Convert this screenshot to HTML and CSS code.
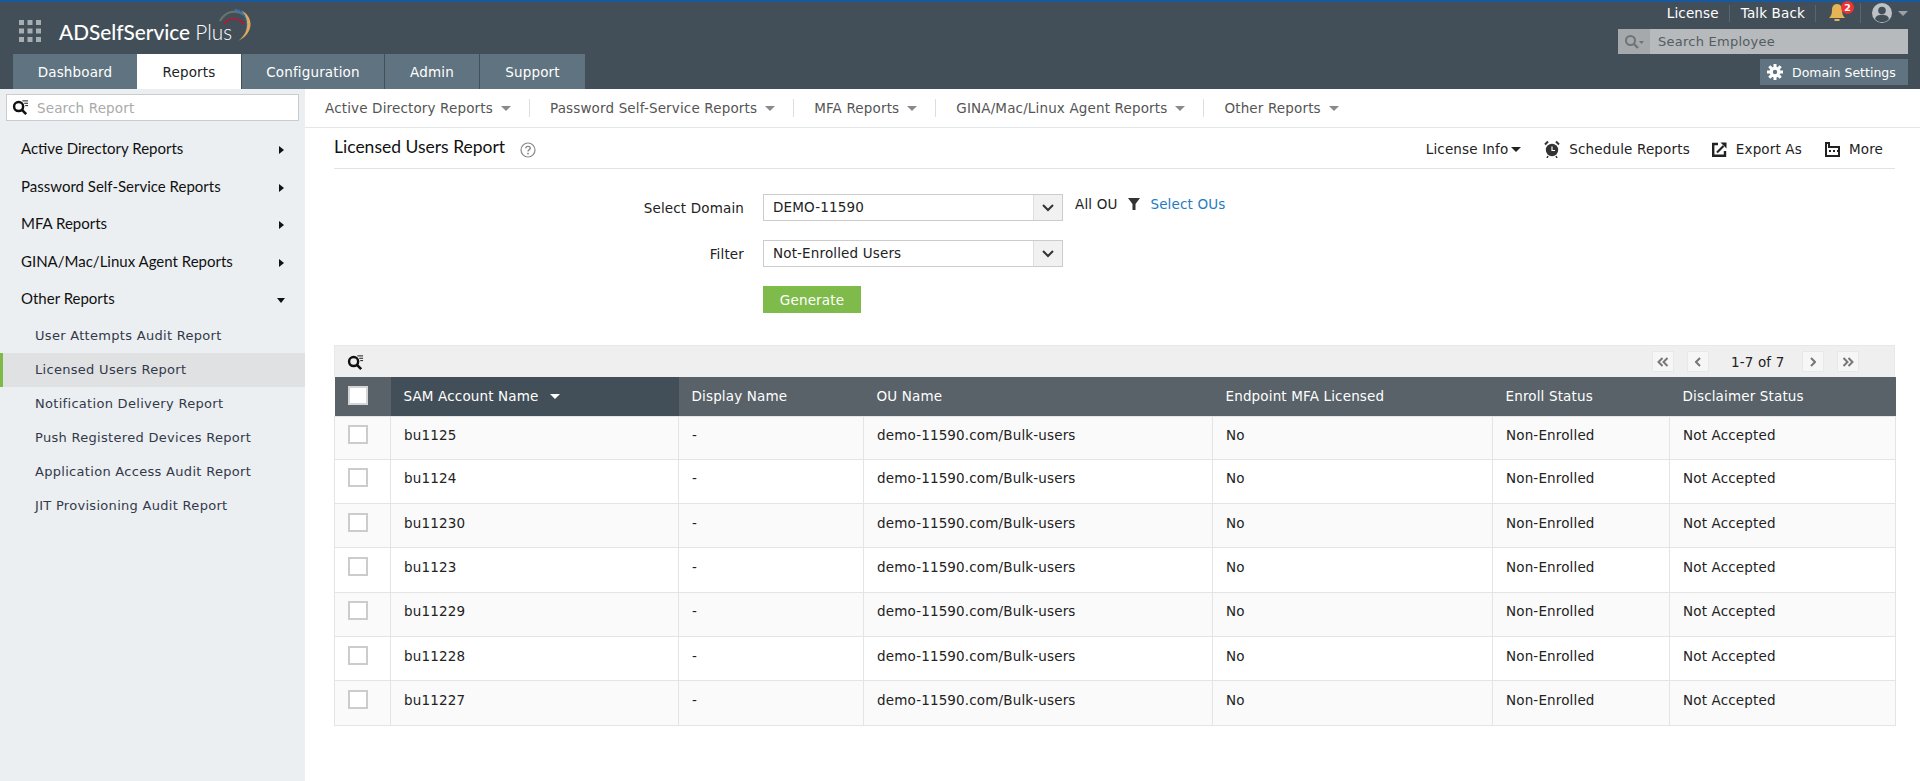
FILE: index.html
```html
<!DOCTYPE html>
<html lang="en">
<head>
<meta charset="utf-8">
<title>ADSelfService Plus - Licensed Users Report</title>
<link rel="stylesheet" href="styles.css">
</head>
<body>
<header class="topbar">
  <div class="top-left">
    <div class="brand">
      <svg class="apps" viewBox="0 0 22 22" width="22" height="22"><g fill="#a7aeb2"><rect width="5" height="5"/><rect x="8.500" width="5" height="5"/><rect x="17" width="5" height="5"/><rect y="8.500" width="5" height="5"/><rect x="8.500" y="8.500" width="5" height="5"/><rect x="17" y="8.500" width="5" height="5"/><rect y="17" width="5" height="5"/><rect x="8.500" y="17" width="5" height="5"/><rect x="17" y="17" width="5" height="5"/></g></svg>
      <span class="logo-text">ADSelfService <span class="logo-plus">Plus</span></span>
      <svg class="logo-arc" viewBox="0 0 36 34" width="36" height="34"><path d="M2 13C7 3 19 1 26 7" fill="none" stroke="#66756a" stroke-width="2.200"/><path d="M6 16C11 9 20 9 26 16" fill="none" stroke="#c2142a" stroke-width="2.200" stroke-dasharray="2 1"/><path d="M17 2C27 3 31 12 29 23" fill="none" stroke="#2f74c4" stroke-width="2.600" stroke-dasharray="2 1"/><path d="M24 3C35 8 37 25 20 33C31 25 32 12 24 3Z" fill="#e0a95a"/></svg>
    </div>
    <nav class="tabs">
      <a class="tab">Dashboard</a>
      <a class="tab tab-active">Reports</a>
      <a class="tab">Configuration</a>
      <a class="tab">Admin</a>
      <a class="tab">Support</a>
    </nav>
  </div>
  <div class="top-right">
    <div class="links">
      <a class="link">License</a>
      <a class="link link-sep">Talk Back</a>
      <span class="bell">
        <svg viewBox="0 0 18 20" width="18" height="20"><path d="M9 1C5.500 1 4 4 4 7C4 11 3 13 1 15H17C15 13 14 11 14 7C14 4 12.500 1 9 1Z" fill="#e5b456"/><rect x="6.500" y="16" width="5" height="2" fill="#e5b456"/></svg>
        <span class="badge">2</span>
      </span>
      <span class="avatar">
        <svg viewBox="0 0 20 20" width="20" height="20"><circle cx="10" cy="10" r="10" fill="#bcc2c5"/><circle cx="10" cy="7.500" r="3.800" fill="#434f58"/><path d="M3 16C4 12.500 7 11.800 10 11.800S16 12.500 17 16C15 18.500 12.500 19 10 19S5 18.500 3 16Z" fill="#434f58"/></svg>
      </span>
      <i class="caret caret-grey"></i>
    </div>
    <div class="emp-search">
      <span class="emp-icon">
        <svg viewBox="0 0 20 16" width="20" height="16"><circle cx="6.500" cy="6.500" r="4.500" fill="none" stroke="#6d7478" stroke-width="2"/><path d="M10 10L14 14" stroke="#6d7478" stroke-width="2.400"/><path d="M15 7H20L17.500 10Z" fill="#6d7478"/></svg>
      </span>
      <span class="emp-text">Search Employee</span>
    </div>
    <a class="domain-btn">
      <svg viewBox="0 0 16 16" width="16" height="16"><path fill-rule="evenodd" fill="#fff" d="M8 2.500A5.500 5.500 0 1 0 8 13.500A5.500 5.500 0 1 0 8 2.500ZM8 5.800A2.200 2.200 0 1 1 8 10.200A2.200 2.200 0 1 1 8 5.800Z"/><g stroke="#fff" stroke-width="3"><path d="M8 0V3M8 13V16M0 8H3M13 8H16M2.300 2.300L4.400 4.400M11.600 11.600L13.700 13.700M13.700 2.300L11.600 4.400M4.400 11.600L2.300 13.700"/></g></svg>
      <span>Domain Settings</span>
    </a>
  </div>
</header>

<div class="body-row">
  <aside class="sidebar">
    <div class="side-search">
      <svg viewBox="0 0 18 18" width="17" height="17"><circle cx="7" cy="8" r="4.800" fill="none" stroke="#111" stroke-width="2.600"/><path d="M10.500 11.500L15 16" stroke="#111" stroke-width="2.800"/><path d="M11 2H17M13 4.500H17M14 7H17" stroke="#111" stroke-width="1"/></svg>
      <span>Search Report</span>
    </div>
    <ul class="menu">
      <li class="menu-item">Active Directory Reports<i class="tri-right"></i></li>
      <li class="menu-item">Password Self-Service Reports<i class="tri-right"></i></li>
      <li class="menu-item">MFA Reports<i class="tri-right"></i></li>
      <li class="menu-item">GINA/Mac/Linux Agent Reports<i class="tri-right"></i></li>
      <li class="menu-item">Other Reports<i class="tri-down"></i></li>
    </ul>
    <ul class="submenu">
      <li class="sub-item">User Attempts Audit Report</li>
      <li class="sub-item sub-active">Licensed Users Report</li>
      <li class="sub-item">Notification Delivery Report</li>
      <li class="sub-item">Push Registered Devices Report</li>
      <li class="sub-item">Application Access Audit Report</li>
      <li class="sub-item">JIT Provisioning Audit Report</li>
    </ul>
  </aside>

  <main class="content">
    <nav class="subnav">
      <a class="subnav-item">Active Directory Reports<i class="caret"></i></a>
      <a class="subnav-item">Password Self-Service Reports<i class="caret"></i></a>
      <a class="subnav-item">MFA Reports<i class="caret"></i></a>
      <a class="subnav-item">GINA/Mac/Linux Agent Reports<i class="caret"></i></a>
      <a class="subnav-item">Other Reports<i class="caret"></i></a>
    </nav>

    <section class="report">
      <div class="title-row">
        <h1 class="title">Licensed Users Report</h1>
        <svg class="help" viewBox="0 0 16 16" width="16" height="16"><circle cx="8" cy="8" r="7" fill="none" stroke="#888" stroke-width="1.200"/><path d="M5.800 6.200C5.800 3.800 10.300 3.800 10.300 6.200C10.300 7.800 8 7.600 8 9.600" fill="none" stroke="#888" stroke-width="1.400"/><rect x="7.200" y="10.800" width="1.600" height="1.600" fill="#888"/></svg>
        <div class="actions">
          <a class="action action-info">License Info<i class="caret caret-dark"></i></a>
          <a class="action">
            <svg viewBox="0 0 16 18" width="16" height="18"><circle cx="8" cy="10" r="6.200" fill="#333"/><path d="M8 6.500V10.500H11" fill="none" stroke="#fff" stroke-width="1.200"/><path d="M1 4.500L4 1.500M15 4.500L12 1.500" stroke="#333" stroke-width="2"/><path d="M4 16L3 18M12 16L13 18" stroke="#333" stroke-width="1.500"/></svg>
            <span>Schedule Reports</span>
          </a>
          <a class="action">
            <svg viewBox="0 0 15 15" width="15" height="15"><path d="M6 2H1.200V13.800H13V9" fill="none" stroke="#222" stroke-width="2.400"/><path d="M8.500 0.500H14.500V6.500Z" fill="#222"/><path d="M5 10.500L11.500 4" stroke="#222" stroke-width="2.200"/></svg>
            <span>Export As</span>
          </a>
          <a class="action action-more">
            <svg viewBox="0 0 15 15" width="15" height="15"><path d="M1 1H4V5H14V14H1Z" fill="none" stroke="#222" stroke-width="2"/><path d="M4 8H6V10H4ZM8 8H10V10H8ZM12 8H15V10H12Z" fill="#222"/></svg>
            <span>More</span>
          </a>
        </div>
      </div>

      <form class="filters">
        <label class="f-label">Select Domain</label>
        <div class="select"><span class="select-val">DEMO-11590</span><span class="select-arrow"><svg viewBox="0 0 12 8" width="12" height="8"><path d="M1 1L6 6L11 1" fill="none" stroke="#333" stroke-width="2"/></svg></span></div>
        <div class="ou">
          <span>All OU</span>
          <svg viewBox="0 0 12 12" width="12" height="12"><path d="M0 0H12L7.500 6V12H4.500V6Z" fill="#333"/></svg>
          <a class="ou-link">Select OUs</a>
        </div>
        <label class="f-label">Filter</label>
        <div class="select"><span class="select-val">Not-Enrolled Users</span><span class="select-arrow"><svg viewBox="0 0 12 8" width="12" height="8"><path d="M1 1L6 6L11 1" fill="none" stroke="#333" stroke-width="2"/></svg></span></div>
        <span></span>
        <span></span>
        <button class="generate" type="button">Generate</button>
      </form>

      <div class="toolbar">
        <svg class="tool-search" viewBox="0 0 18 18" width="17" height="17"><circle cx="7" cy="8" r="4.800" fill="none" stroke="#111" stroke-width="2.600"/><path d="M10.500 11.500L15 16" stroke="#111" stroke-width="2.800"/><path d="M11 2H17M13 4.500H17M14 7H17" stroke="#111" stroke-width="1"/></svg>
        <div class="pager">
          <span class="pg-btn"><svg viewBox="0 0 12 10" width="12" height="10"><path d="M5.500 1L1.500 5L5.500 9M10.500 1L6.500 5L10.500 9" fill="none" stroke="#777" stroke-width="2"/></svg></span>
          <span class="pg-btn"><svg viewBox="0 0 6 10" width="6" height="10"><path d="M5 1L1 5L5 9" fill="none" stroke="#777" stroke-width="2"/></svg></span>
          <span class="pg-text">1-7 of 7</span>
          <span class="pg-btn"><svg viewBox="0 0 6 10" width="6" height="10"><path d="M1 1L5 5L1 9" fill="none" stroke="#777" stroke-width="2"/></svg></span>
          <span class="pg-btn"><svg viewBox="0 0 12 10" width="12" height="10"><path d="M1.500 1L5.500 5L1.500 9M6.500 1L10.500 5L6.500 9" fill="none" stroke="#777" stroke-width="2"/></svg></span>
        </div>
      </div>

      <table class="grid">
        <colgroup>
          <col class="c-check"><col class="c-sam"><col class="c-disp"><col class="c-ou"><col class="c-mfa"><col class="c-enroll"><col class="c-disc">
        </colgroup>
        <thead>
          <tr>
            <th class="th-check"><span class="cb cb-head"></span></th>
            <th class="th-sorted">SAM Account Name<i class="caret caret-white"></i></th>
            <th>Display Name</th>
            <th>OU Name</th>
            <th>Endpoint MFA Licensed</th>
            <th>Enroll Status</th>
            <th>Disclaimer Status</th>
          </tr>
        </thead>
        <tbody>
          <tr><td class="td-check"><span class="cb"></span></td><td>bu1125</td><td>-</td><td>demo-11590.com/Bulk-users</td><td>No</td><td>Non-Enrolled</td><td>Not Accepted</td></tr>
          <tr><td class="td-check"><span class="cb"></span></td><td>bu1124</td><td>-</td><td>demo-11590.com/Bulk-users</td><td>No</td><td>Non-Enrolled</td><td>Not Accepted</td></tr>
          <tr><td class="td-check"><span class="cb"></span></td><td>bu11230</td><td>-</td><td>demo-11590.com/Bulk-users</td><td>No</td><td>Non-Enrolled</td><td>Not Accepted</td></tr>
          <tr><td class="td-check"><span class="cb"></span></td><td>bu1123</td><td>-</td><td>demo-11590.com/Bulk-users</td><td>No</td><td>Non-Enrolled</td><td>Not Accepted</td></tr>
          <tr><td class="td-check"><span class="cb"></span></td><td>bu11229</td><td>-</td><td>demo-11590.com/Bulk-users</td><td>No</td><td>Non-Enrolled</td><td>Not Accepted</td></tr>
          <tr><td class="td-check"><span class="cb"></span></td><td>bu11228</td><td>-</td><td>demo-11590.com/Bulk-users</td><td>No</td><td>Non-Enrolled</td><td>Not Accepted</td></tr>
          <tr><td class="td-check"><span class="cb"></span></td><td>bu11227</td><td>-</td><td>demo-11590.com/Bulk-users</td><td>No</td><td>Non-Enrolled</td><td>Not Accepted</td></tr>
        </tbody>
      </table>
    </section>
  </main>
</div>
</body>
</html>
```

FILE: styles.css
```css
* { box-sizing: border-box; }
html, body { margin: 0; padding: 0; height: 100%; }
body {
  font-family: "DejaVu Sans", sans-serif;
  font-size: 13.500px;
  letter-spacing: 0.150px;
  color: #222;
  background: #fff;
  overflow: hidden;
  display: flex;
  flex-direction: column;
}
ul { list-style: none; margin: 0; padding: 0; }
i { display: inline-block; }

/* Top bar */
.topbar {
  height: 89px;
  flex: none;
  background: #434f58;
  border-top: 2px solid #17589f;
  display: flex;
  justify-content: space-between;
}
.top-left { display: flex; flex-direction: column; justify-content: flex-end; padding-left: 13px; }
.brand { flex: 1; display: flex; align-items: center; padding: 6px 0 0 6px; }
.apps { flex: none; }
.logo-text {
  font-family: Lato, sans-serif;
  font-size: 20.800px;
  font-weight: 500;
  color: #fff;
  margin-left: 18px;
  letter-spacing: 0;
}
.logo-plus { font-weight: 300; }
.logo-arc { margin: -12px 0 0 -14px; }
.tabs { display: flex; gap: 1px; height: 35px; }
.tab {
  display: flex;
  align-items: center;
  justify-content: center;
  background: #5f7480;
  color: #fff;
  height: 35px;
}
.tab:nth-child(1) { width: 124px; margin-right: -1px; }
.tab:nth-child(2) { width: 104px; }
.tab:nth-child(3) { width: 142px; }
.tab:nth-child(4) { width: 94px; }
.tab:nth-child(5) { width: 105px; }
.tab-active { background: #fff; color: #222; }

.top-right { width: 291px; padding-right: 12px; display: flex; flex-direction: column; align-items: flex-end; }
.links { height: 27px; padding-bottom: 5px; display: flex; align-items: center; justify-content: flex-end; color: #fff; }
.link { color: #fff; }
.link-sep { margin-left: 10px; padding-left: 11px; border-left: 1px solid #5a666f; line-height: 17px; }
.bell {
  position: relative;
  display: flex;
  margin-left: 10px;
  padding: 0 14px 0 12px;
  border-left: 1px solid #5a666f;
  height: 17px;
  align-items: center;
}
.badge {
  position: absolute;
  top: -4px;
  left: 25px;
  width: 13px;
  height: 13px;
  border-radius: 50%;
  background: #ee3333;
  color: #fff;
  font-size: 9.500px;
  font-weight: 700;
  line-height: 13px;
  text-align: center;
  letter-spacing: 0;
}
.avatar { display: flex; padding-left: 11px; border-left: 1px solid #5a666f; }
.caret {
  width: 0;
  height: 0;
  border-left: 5px solid transparent;
  border-right: 5px solid transparent;
  border-top: 5px solid #8a8a8a;
  margin-left: 8px;
  vertical-align: 2px;
}
.caret-grey { border-top-color: #9aa2a7; margin-left: 6px; }
.caret-dark { border-top-color: #222; margin-left: 3px; }
.caret-white { border-top-color: #fff; margin-left: 11px; }

.emp-search { width: 290px; height: 25px; background: #b6babc; display: flex; flex: none; font-size: 13px; letter-spacing: 0.250px; }
.emp-icon { width: 32px; background: #a5a9ab; display: flex; align-items: center; justify-content: center; }
.emp-text { color: #545c62; padding-left: 8px; line-height: 25px; }
.domain-btn {
  width: 148px;
  height: 26px;
  margin-top: 5px;
  flex: none;
  background: #5f7480;
  color: #fff;
  display: flex;
  align-items: center;
  gap: 9px;
  padding-left: 7px;
  font-size: 12.500px;
  letter-spacing: 0;
}

/* Body */
.body-row { flex: 1; display: flex; min-height: 0; }
.sidebar { width: 305px; flex: none; background: #ebeff1; padding-top: 5px; }
.side-search {
  margin: 0 6px;
  height: 27px;
  background: #fff;
  border: 1px solid #c9cdcf;
  display: flex;
  align-items: center;
  gap: 8px;
  padding-left: 5px;
  color: #aaa;
}
.menu { padding-top: 8.500px; }
.menu-item {
  height: 37.500px;
  display: flex;
  align-items: center;
  justify-content: space-between;
  padding: 0 21px;
  font-family: Lato, sans-serif;
  font-size: 15px;
  letter-spacing: 0;
  color: #111;
}
.tri-right { width: 0; height: 0; border-top: 4px solid transparent; border-bottom: 4px solid transparent; border-left: 5px solid #111; margin: 4px 0 0; }
.tri-down { width: 0; height: 0; border-left: 4px solid transparent; border-right: 4px solid transparent; border-top: 5px solid #111; margin: 4px -1px 0 0; }
.submenu { padding-top: 1.500px; font-size: 13px; letter-spacing: 0.300px; }
.sub-item { height: 34px; line-height: 33px; padding-left: 35px; color: #33394a; }
.sub-active { background: #e0e1e3; border-left: 3px solid #7dbb46; padding-left: 32px; }

/* Content */
.content { flex: 1; min-width: 0; }
.subnav { height: 39px; border-bottom: 1px solid #e3e7e8; display: flex; align-items: center; padding-left: 20px; color: #555; }
.subnav-item { padding-right: 18px; margin-right: 20px; border-right: 1px solid #dcdfe0; line-height: 18px; white-space: nowrap; }
.subnav-item:last-child { border-right: 0; }
.report { padding: 0 25px 0 29px; }
.title-row { height: 41px; border-bottom: 1px solid #e3e3e3; display: flex; align-items: center; }
.title { font-family: Lato, sans-serif; font-size: 17.500px; font-weight: 400; letter-spacing: 0; color: #111; margin: 0 0 3px; }
.help { margin: 4px 0 0 15px; }
.actions { margin-left: auto; display: flex; align-items: center; padding: 2px 12px 0 0; color: #222; }
.action { display: flex; align-items: center; gap: 9px; margin-left: 22px; }
.action-info { display: block; margin-right: 1px; }
.action-more { margin-left: 23px; }

.filters {
  display: grid;
  grid-template-columns: 410px 300px auto;
  column-gap: 19px;
  row-gap: 19px;
  grid-auto-rows: 27px;
  padding-top: 25px;
  align-items: center;
}
.f-label { text-align: right; }
.select { display: flex; height: 27px; border: 1px solid #ccc; background: #fff; }
.select-val { flex: 1; padding-left: 9px; line-height: 25px; }
.select-arrow { width: 29px; background: #f1f1f1; border-left: 1px solid #ddd; display: flex; align-items: center; justify-content: center; }
.ou { display: flex; align-items: center; gap: 11px; margin: -7px 0 0 -7px; }
.ou-link { color: #1f7cc0; margin-left: -1px; }
.generate {
  width: 98px;
  height: 27px;
  border: 0;
  padding: 0;
  background: #7fbb4b;
  color: #fff;
  font: inherit;
  letter-spacing: inherit;
}

.toolbar {
  margin-top: 32px;
  height: 32px;
  background: #efefef;
  border: 1px solid #e8e8e8;
  border-bottom: 0;
  display: flex;
  align-items: center;
  justify-content: space-between;
  padding: 0 35px 0 12px;
}
.tool-search { margin-top: 2px; }
.pager { display: flex; align-items: center; }
.pg-btn {
  width: 22px;
  height: 21px;
  background: #f6f6f6;
  border: 1px solid #e6e9e8;
  display: flex;
  align-items: center;
  justify-content: center;
  margin-left: 13px;
}
.pg-text { width: 58px; margin-left: 22px; }

.grid { width: 1561px; border-collapse: collapse; table-layout: fixed; }
.c-check { width: 56px; }
.c-sam { width: 288px; }
.c-disp { width: 185px; }
.c-ou { width: 349px; }
.c-mfa { width: 280px; }
.c-enroll { width: 177px; }
.c-disc { width: 226px; }
.grid th {
  height: 39px;
  background: #586268;
  color: #fff;
  font-weight: 400;
  text-align: left;
  padding: 0 13px;
}
.grid th.th-sorted { background: #434f58; }
.grid td {
  height: 44.300px;
  padding: 0 13px 6px;
  border: 1px solid #e4e4e4;
  background: #fff;
}
.grid tbody tr:first-child td { height: 43.300px; }
.grid tbody tr:nth-child(odd) td { background: #fafafa; }
.th-check, .td-check { text-align: left; }
.grid th.th-check { padding: 0 0 0 13px; }
.grid td.td-check { padding: 0 0 7px 13px; }
.cb { display: block; width: 20px; height: 19px; background: #fff; border: 2px solid #ccc; }
.cb-head { border-color: #d5d5d5; margin-top: -2px; }
```
